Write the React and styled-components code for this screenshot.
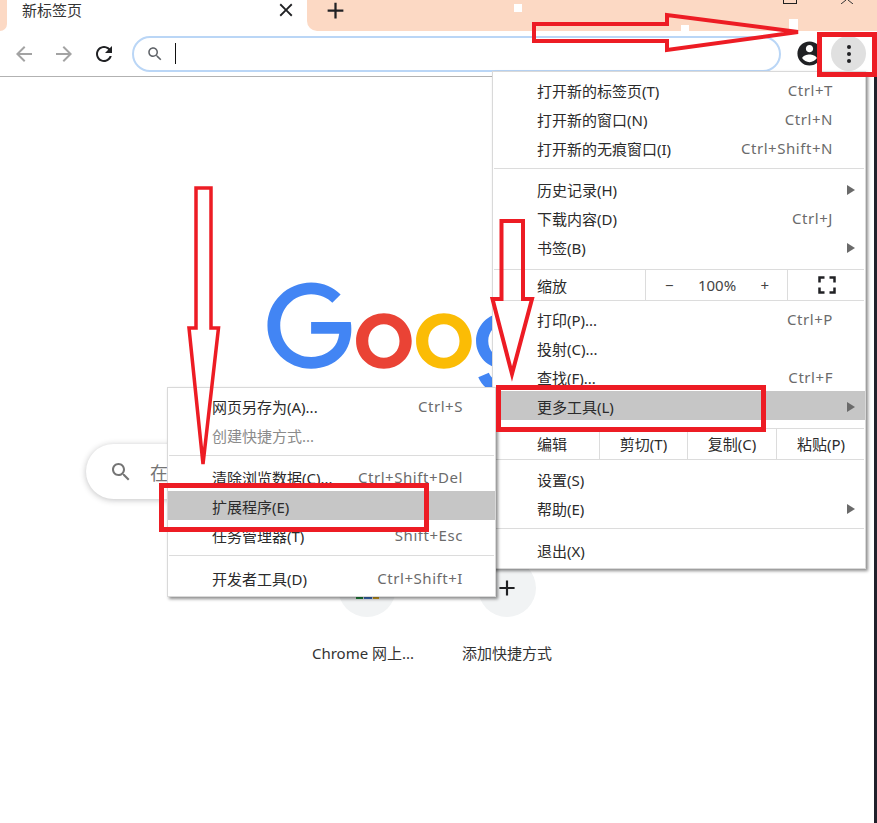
import React from 'react';
import styled, { createGlobalStyle } from 'styled-components';

const GlobalStyle = createGlobalStyle`
  html, body {
    margin: 0;
    padding: 0;
    background: #fff;
  }
  body {
    font-family: "Noto Sans", "Noto Sans CJK SC", sans-serif;
    color: #2b2b2b;
  }
`;

const Window = styled.div`
  position: relative;
  width: 877px;
  height: 823px;
  overflow: hidden;
  display: flex;
  flex-direction: column;
  background: #fff;
`;

const TabStrip = styled.div`
  display: flex;
  height: 31px;
  flex-shrink: 0;
`;

const PeachLeft = styled.div`
  width: 7px;
  background: #fcd9c4;
  border-bottom-right-radius: 7px;
`;

const PeachRight = styled.div`
  flex: 1;
  display: flex;
  padding: 0 0 11px 15px;
  align-items: center;
  background: #fcd9c4;
  border-bottom-left-radius: 10px;
`;

const Tab = styled.div`
  width: 300px;
  display: flex;
  align-items: center;
  justify-content: space-between;
  padding: 0 10px 11px 15px;
  box-sizing: border-box;
  font-size: 15px;
  line-height: 20px;
  color: #333;
`;

const Icon = styled.svg`
  display: block;
  flex-shrink: 0;
  width: ${(p) => p.$size || 24}px;
  height: ${(p) => p.$size || 24}px;
  fill: ${(p) => p.$color || '#202124'};
`;

const Toolbar = styled.div`
  display: flex;
  align-items: center;
  height: 46px;
  flex-shrink: 0;
  padding-left: 4px;
  box-sizing: border-box;
  border-bottom: 1px solid #b2b2b2;
`;

const NavButton = styled.div`
  width: 40px;
  display: flex;
  justify-content: center;
`;

const AddressBar = styled.div`
  width: 649px;
  height: 36px;
  margin-left: 8px;
  display: flex;
  align-items: center;
  box-sizing: border-box;
  padding-left: 12px;
  border: 2px solid #bad6f6;
  border-radius: 18px;
`;

const Caret = styled.div`
  width: 1px;
  height: 21px;
  margin-left: 11px;
  background: #111;
`;

const Avatar = styled.div`
  margin-left: 14px;
`;

const MenuButton = styled.div`
  width: 35px;
  height: 35px;
  margin-left: 7px;
  border-radius: 50%;
  background: #e0e0e0;
  display: flex;
  flex-direction: column;
  align-items: center;
  justify-content: center;
  gap: 3px;
`;

const Dot = styled.span`
  width: 4px;
  height: 4px;
  border-radius: 50%;
  background: #202124;
`;

const Body = styled.div`
  flex: 1;
  display: flex;
`;

const Page = styled.main`
  flex: 1;
  display: flex;
  flex-direction: column;
  align-items: center;
  padding-top: 205px;
`;

const DarkEdge = styled.div`
  width: 3px;
  background: #20212b;
`;

const Logo = styled.svg`
  display: block;
  width: 340px;
  height: 115px;
`;

const SearchBox = styled.div`
  width: 702px;
  height: 55px;
  margin-top: 47px;
  display: flex;
  align-items: center;
  gap: 17px;
  padding-left: 23px;
  box-sizing: border-box;
  border-radius: 28px;
  font-size: 18px;
  color: #757575;
  box-shadow: 0 1px 6px rgba(32, 33, 36, 0.28);
`;

const Shortcuts = styled.div`
  display: flex;
  gap: 28px;
  margin-top: 60px;
`;

const Shortcut = styled.div`
  width: 112px;
  display: flex;
  flex-direction: column;
  align-items: center;
  font-size: 15px;
  line-height: 20px;
  color: #333;
`;

const ShortcutIcon = styled.div`
  width: 58px;
  height: 58px;
  margin-bottom: 26px;
  border-radius: 50%;
  background: #f1f3f4;
  display: flex;
  align-items: center;
  justify-content: center;
`;

const ShortcutLabel = styled.span`
  white-space: nowrap;
  margin-right: ${(p) => p.$nudge || 0}px;
`;

const StoreIcon = styled.svg`
  display: block;
  width: 24px;
  height: 24px;
`;

const Menu = styled.div`
  position: absolute;
  left: ${(p) => p.$left}px;
  top: ${(p) => p.$top}px;
  width: ${(p) => p.$width}px;
  box-sizing: border-box;
  padding: 3px 0 4px;
  background: #fff;
  border: 1px solid #d9d9d9;
  box-shadow: 2px 2px 3px rgba(0, 0, 0, 0.45);
  font-size: 15px;
`;

const Row = styled.div`
  display: flex;
  align-items: center;
  justify-content: space-between;
  height: 29px;
  padding: 1px 32px 0 44px;
  box-sizing: border-box;
  background: ${(p) => (p.$active ? '#c6c6c6' : 'transparent')};
  color: ${(p) => (p.$disabled ? '#8b8b8b' : '#2b2b2b')};
`;

const Keys = styled.span`
  color: #6b6b6b;
  letter-spacing: 0.55px;
`;

const SubArrow = styled.span`
  margin: 2px -22px 0 0;
  border-left: 8px solid #6a6a6a;
  border-top: 5.5px solid transparent;
  border-bottom: 5.5px solid transparent;
`;

const Divider = styled.div`
  height: 1px;
  background: #dcdcdc;
  margin: ${(p) => p.$above}px 1px ${(p) => p.$below}px;
`;

const ControlRow = styled.div`
  display: grid;
  grid-template-columns: ${(p) => p.$columns};
  height: ${(p) => p.$height}px;
`;

const Cell = styled.div`
  display: flex;
  align-items: center;
  justify-content: ${(p) => (p.$label ? 'flex-start' : 'center')};
  padding: ${(p) => (p.$label ? '0 0 1px 44px' : '0 0 1px')};
  border-left: ${(p) => (p.$label ? 'none' : '1px solid #dcdcdc')};
`;

const ZoomCell = styled(Cell)`
  justify-content: space-between;
  padding: 0 18px 1px 19px;
  color: #444;
`;

const RedBox = styled.div`
  position: absolute;
  left: ${(p) => p.$left}px;
  top: ${(p) => p.$top}px;
  width: ${(p) => p.$width}px;
  height: ${(p) => p.$height}px;
  box-sizing: border-box;
  border: 5px solid #ed1c24;
`;

const Annotations = styled.svg`
  position: absolute;
  left: 0;
  top: 0;
  width: 877px;
  height: 823px;
  pointer-events: none;
  fill: none;
  stroke: #ed1c24;
  stroke-linejoin: miter;
`;

const Speck = styled.div`
  position: absolute;
  left: ${(p) => p.$left}px;
  top: ${(p) => p.$top}px;
  width: ${(p) => p.$width}px;
  height: ${(p) => p.$height}px;
  background: #fff;
`;

const MaximizeMark = styled.div`
  position: absolute;
  left: 783px;
  top: -10px;
  width: 12px;
  height: 12px;
  border: 1px solid #222;
`;

const CloseMark = styled.svg`
  position: absolute;
  left: 840px;
  top: 0;
  width: 14px;
  height: 4px;
  stroke: #333;
  stroke-width: 1;
  fill: none;
`;

const paths = {
  back: 'M20 11H7.83l5.59-5.59L12 4l-8 8 8 8 1.41-1.41L7.83 13H20v-2z',
  forward: 'M12 4l-1.41 1.41L16.17 11H4v2h12.17l-5.58 5.59L12 20l8-8z',
  reload: 'M17.65 6.35C16.2 4.9 14.21 4 12 4c-4.42 0-7.99 3.58-7.99 8s3.57 8 7.99 8c3.73 0 6.84-2.55 7.73-6h-2.08c-.82 2.33-3.04 4-5.65 4-3.31 0-6-2.69-6-6s2.69-6 6-6c1.66 0 3.14.69 4.22 1.78L13 11h7V4l-2.35 2.35z',
  search: 'M15.5 14h-.79l-.28-.27C15.41 12.59 16 11.11 16 9.5 16 5.91 13.09 3 9.5 3S3 5.91 3 9.5 5.91 16 9.5 16c1.61 0 3.09-.59 4.23-1.57l.27.28v.79l5 4.99L20.49 19l-4.99-5zm-6 0C7.01 14 5 11.99 5 9.5S7.01 5 9.5 5 14 7.01 14 9.5 11.99 14 9.5 14z',
  account: 'M12 2C6.48 2 2 6.48 2 12s4.48 10 10 10 10-4.48 10-10S17.52 2 12 2zm0 3c1.66 0 3 1.34 3 3s-1.34 3-3 3-3-1.34-3-3 1.34-3 3-3zm0 14.2c-2.5 0-4.71-1.28-6-3.22.03-1.99 4-3.08 6-3.08 1.99 0 5.97 1.09 6 3.08-1.29 1.94-3.5 3.22-6 3.22z',
  close: 'M19 6.41L17.59 5 12 10.59 6.41 5 5 6.41 10.59 12 5 17.59 6.41 19 12 13.41 17.59 19 19 17.59 13.41 12z',
  plus: 'M19 13h-6v6h-2v-6H5v-2h6V5h2v6h6v2z',
  fullscreen: 'M7 14H5v5h5v-2H7v-3zm-2-4h2V7h3V5H5v5zm12 7h-3v2h5v-5h-2v3zM14 5v2h3v3h2V5h-5z',
};

const Glyph = ({ name, size, color }) => (
  <Icon viewBox="0 0 24 24" $size={size} $color={color}>
    <path d={paths[name]} />
  </Icon>
);

const MenuRow = ({ label, keys, sub, active, disabled }) => (
  <Row $active={active} $disabled={disabled}>
    <span>{label}</span>
    {keys && <Keys>{keys}</Keys>}
    {sub && <SubArrow />}
  </Row>
);

const App = () => (
  <Window>
    <GlobalStyle />
    <TabStrip>
      <PeachLeft />
      <Tab>
        <span>新标签页</span>
        <Glyph name="close" size={22} />
      </Tab>
      <PeachRight>
        <Glyph name="plus" size={27} />
      </PeachRight>
    </TabStrip>

    <Toolbar>
      <NavButton><Glyph name="back" color="#a3a3a3" /></NavButton>
      <NavButton><Glyph name="forward" color="#a3a3a3" /></NavButton>
      <NavButton><Glyph name="reload" /></NavButton>
      <AddressBar>
        <Glyph name="search" size={18} color="#5f6368" />
        <Caret />
      </AddressBar>
      <Avatar><Glyph name="account" size={29} /></Avatar>
      <MenuButton>
        <Dot />
        <Dot />
        <Dot />
      </MenuButton>
    </Toolbar>

    <Body>
      <Page>
        <Logo viewBox="0 0 272 92">
          <path fill="#4285F4" d="M35.29 41.41V32H67c.31 1.64.47 3.58.47 5.68 0 7.06-1.93 15.79-8.15 22.01-6.05 6.3-13.78 9.66-24.02 9.66C16.32 69.35.36 53.89.36 34.91.36 15.93 16.32.47 35.3.47c10.5 0 17.98 4.12 23.6 9.49l-6.64 6.64c-4.03-3.78-9.49-6.72-16.97-6.72-13.86 0-24.7 11.17-24.7 25.03 0 13.86 10.84 25.03 24.7 25.03 8.99 0 14.11-3.61 17.39-6.89 2.66-2.66 4.41-6.46 5.1-11.65l-22.49.01z" />
          <path fill="#EA4335" d="M115.75 47.18c0 12.77-9.99 22.18-22.25 22.18s-22.25-9.41-22.25-22.18C71.25 34.32 81.24 25 93.5 25s22.25 9.32 22.25 22.18zm-9.74 0c0-7.98-5.79-13.44-12.51-13.44S80.99 39.2 80.99 47.18c0 7.9 5.79 13.44 12.51 13.44s12.51-5.55 12.51-13.44z" />
          <path fill="#FBBC05" d="M163.75 47.18c0 12.77-9.99 22.18-22.25 22.18s-22.25-9.41-22.25-22.18c0-12.85 9.99-22.18 22.25-22.18s22.25 9.32 22.25 22.18zm-9.74 0c0-7.98-5.79-13.44-12.51-13.44s-12.51 5.46-12.51 13.44c0 7.9 5.79 13.44 12.51 13.44s12.51-5.55 12.51-13.44z" />
          <path fill="#4285F4" d="M209.75 26.34v39.82c0 16.38-9.66 23.07-21.08 23.07-10.75 0-17.22-7.19-19.66-13.07l8.48-3.53c1.51 3.61 5.21 7.87 11.17 7.87 7.31 0 11.84-4.51 11.84-13v-3.19h-.34c-2.18 2.69-6.38 5.04-11.68 5.04-11.09 0-21.25-9.66-21.25-22.09 0-12.52 10.16-22.26 21.25-22.26 5.29 0 9.49 2.35 11.68 4.96h.34v-3.61h9.25zm-8.56 20.92c0-7.81-5.21-13.52-11.84-13.52-6.72 0-12.35 5.71-12.35 13.52 0 7.73 5.63 13.36 12.35 13.36 6.63 0 11.84-5.63 11.84-13.36z" />
        </Logo>
        <SearchBox>
          <Glyph name="search" size={24} color="#757575" />
          <span>在</span>
        </SearchBox>
        <Shortcuts>
          <Shortcut>
            <ShortcutIcon>
              <StoreIcon viewBox="0 0 24 24">
                <rect x="1" y="20" width="7" height="3" fill="#1e8e3e" />
                <rect x="9" y="20" width="8" height="3" fill="#3c74c9" />
                <rect x="18" y="20" width="6" height="3" fill="#d9a520" />
              </StoreIcon>
            </ShortcutIcon>
            <ShortcutLabel $nudge={8}>Chrome 网上...</ShortcutLabel>
          </Shortcut>
          <Shortcut>
            <ShortcutIcon>
              <Glyph name="plus" size={26} />
            </ShortcutIcon>
            <ShortcutLabel>添加快捷方式</ShortcutLabel>
          </Shortcut>
        </Shortcuts>
      </Page>
      <DarkEdge />
    </Body>

    <MaximizeMark />
    <CloseMark viewBox="0 0 14 4">
      <path d="M6 0L1 4M8 0l5 4" />
    </CloseMark>
    <Speck $left={514} $top={4} $width={8} $height={8} />
    <Speck $left={681} $top={25} $width={8} $height={6} />
    <Speck $left={789} $top={19} $width={9} $height={12} />

    <Menu $left={492} $top={71} $width={374}>
      <MenuRow label="打开新的标签页(T)" keys="Ctrl+T" />
      <MenuRow label="打开新的窗口(N)" keys="Ctrl+N" />
      <MenuRow label="打开新的无痕窗口(I)" keys="Ctrl+Shift+N" />
      <Divider $above={6} $below={5} />
      <MenuRow label="历史记录(H)" sub />
      <MenuRow label="下载内容(D)" keys="Ctrl+J" />
      <MenuRow label="书签(B)" sub />
      <Divider $above={8} $below={0} />
      <ControlRow $columns="152px 142px 1fr" $height={30}>
        <Cell $label>缩放</Cell>
        <ZoomCell>
          <span>−</span>
          <span>100%</span>
          <span>+</span>
        </ZoomCell>
        <Cell><Glyph name="fullscreen" size={30} /></Cell>
      </ControlRow>
      <Divider $above={0} $below={3} />
      <MenuRow label="打印(P)..." keys="Ctrl+P" />
      <MenuRow label="投射(C)..." />
      <MenuRow label="查找(F)..." keys="Ctrl+F" />
      <MenuRow label="更多工具(L)" sub active />
      <Divider $above={8} $below={0} />
      <ControlRow $columns="106px 88px 89px 1fr" $height={30}>
        <Cell $label>编辑</Cell>
        <Cell>剪切(T)</Cell>
        <Cell>复制(C)</Cell>
        <Cell>粘贴(P)</Cell>
      </ControlRow>
      <Divider $above={0} $below={4} />
      <MenuRow label="设置(S)" />
      <MenuRow label="帮助(E)" sub />
      <Divider $above={6} $below={6} />
      <MenuRow label="退出(X)" />
    </Menu>

    <Menu $left={167} $top={387} $width={329}>
      <MenuRow label="网页另存为(A)..." keys="Ctrl+S" />
      <MenuRow label="创建快捷方式..." disabled />
      <Divider $above={6} $below={6} />
      <MenuRow label="清除浏览数据(C)..." keys="Ctrl+Shift+Del" />
      <MenuRow label="扩展程序(E)" active />
      <MenuRow label="任务管理器(T)" keys="Shift+Esc" />
      <Divider $above={6} $below={7} />
      <MenuRow label="开发者工具(D)" keys="Ctrl+Shift+I" />
    </Menu>

    <RedBox $left={817} $top={32} $width={60} $height={45} />
    <RedBox $left={496} $top={385} $width={270} $height={47} />
    <RedBox $left={159} $top={483} $width={270} $height={49} />

    <Annotations viewBox="0 0 877 823">
      <polygon strokeWidth="4" points="534,24 667,24 667,15 798,32 667,50 667,41 534,41" />
      <polygon strokeWidth="4" points="501.5,221 523,221 523,299 532,299 512,374 492.5,299 501.5,299" />
      <polygon strokeWidth="3.5" points="196,188 211,188 211,328 218.5,328 203,464 189,328 196,328" />
    </Annotations>
  </Window>
);

export default App;
